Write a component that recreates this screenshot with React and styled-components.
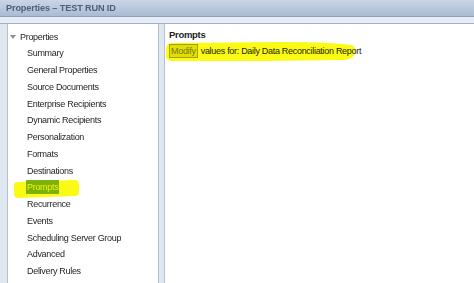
import React from 'react';
import styled, { createGlobalStyle } from 'styled-components';

const items = [
  'Summary',
  'General Properties',
  'Source Documents',
  'Enterprise Recipients',
  'Dynamic Recipients',
  'Personalization',
  'Formats',
  'Destinations',
  'Prompts',
  'Recurrence',
  'Events',
  'Scheduling Server Group',
  'Advanced',
  'Delivery Rules',
];

export default function App() {
  return (
    <Window>
      <GlobalStyle />
      <TitleBar>Properties – TEST RUN ID</TitleBar>
      <SubBar />
      <Body>
        <Sidebar>
          <RootRow>
            <Arrow />
            Properties
          </RootRow>
          {items.map((item) => (
            <Item key={item}>
              <ItemLabel selected={item === 'Prompts'}>{item}</ItemLabel>
            </Item>
          ))}
          <Marker width="72" height="22" style={{ left: 2, top: 154 }}>
            <path d="M4 8 Q3 4 8 4 L64 2 Q69 2 69 7 L69 14 Q69 18 64 18 L9 20 Q4 20 4 16 Z" />
          </Marker>
        </Sidebar>
        <Content>
          <Heading>Prompts</Heading>
          <PromptLine>
            <ModifyButton>Modify</ModifyButton>
            <span>values for: Daily Data Reconciliation Report</span>
          </PromptLine>
          <Marker width="196" height="24" style={{ left: -1, top: 16 }}>
            <path d="M2 9 Q2 3 9 3 L120 2 Q165 2 187 5 Q193 7 191 13 Q189 20 179 20 L100 21 L8 21 Q2 21 2 15 Z" />
          </Marker>
        </Content>
      </Body>
    </Window>
  );
}

const GlobalStyle = createGlobalStyle`
  html, body {
    margin: 0;
    padding: 0;
    background: #dfe7f1;
  }
`;

const Window = styled.div`
  display: flex;
  flex-direction: column;
  width: 474px;
  height: 283px;
  overflow: hidden;
  background: #dfe7f1;
  font-family: 'Liberation Sans', Arial, sans-serif;
  font-size: 9px;
  color: #1e1e1e;
`;

const TitleBar = styled.div`
  flex: 0 0 16px;
  display: flex;
  align-items: center;
  padding-left: 6px;
  background: linear-gradient(#cad6e6, #a9bbd3);
  border-bottom: 1px solid #8e9fb7;
  color: #4f5f77;
  font-weight: 700;
  font-size: 9.2px;
  letter-spacing: -0.15px;
`;

const SubBar = styled.div`
  flex: 0 0 6px;
  background: #e6edf6;
  border-bottom: 1px solid #a6afbb;
`;

const Body = styled.div`
  flex: 1;
  display: flex;
  gap: 5px;
  padding-left: 7px;
  background: #dfe7f1;
  min-height: 0;
`;

const Sidebar = styled.div`
  position: relative;
  width: 150px;
  background: #fff;
  border-left: 1px solid #b4c0ce;
  border-right: 1px solid #b4c0ce;
  padding-top: 5px;
  letter-spacing: -0.3px;
`;

const RootRow = styled.div`
  display: flex;
  align-items: center;
  height: 16px;
  padding-left: 1px;
  gap: 2px;
`;

const Arrow = styled.span`
  width: 0;
  height: 0;
  margin: 0 2px 0 1px;
  border-left: 3px solid transparent;
  border-right: 3px solid transparent;
  border-top: 4px solid #8a8f96;
`;

const Item = styled.div`
  display: flex;
  align-items: center;
  height: 16.75px;
  padding-left: 18px;
`;

const ItemLabel = styled.span`
  padding: 1px 1px;
  background: ${(p) => (p.selected ? '#7fb51c' : 'transparent')};
  color: ${(p) => (p.selected ? '#f4f8d8' : 'inherit')};
  line-height: 12px;
`;

const Content = styled.div`
  position: relative;
  flex: 1;
  background: #fff;
  border-left: 1px solid #b4c0ce;
  padding-left: 4px;
  letter-spacing: -0.3px;
`;

const Heading = styled.div`
  font-weight: 700;
  font-size: 9.5px;
  height: 18px;
  display: flex;
  align-items: center;
  padding-top: 1px;
`;

const PromptLine = styled.div`
  display: flex;
  align-items: center;
  gap: 3px;
  height: 15px;
`;

const ModifyButton = styled.span`
  border: 1px solid #a7a447;
  background: #e6e445;
  color: #7e7d4c;
  padding: 0 1px;
  line-height: 12px;
`;

const Marker = styled.svg`
  position: absolute;
  pointer-events: none;
  mix-blend-mode: multiply;
  fill: #fafa14;
`;
